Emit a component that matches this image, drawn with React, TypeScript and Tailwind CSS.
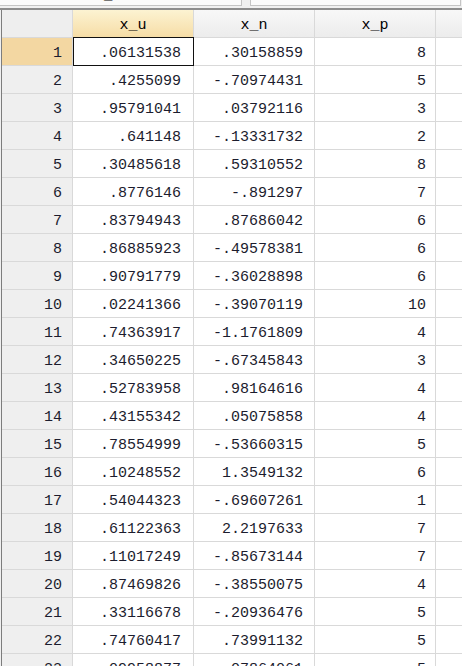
const rows: [string, string, string][] = [
  [".06131538", ".30158859", "8"],
  [".4255099", "-.70974431", "5"],
  [".95791041", ".03792116", "3"],
  [".641148", "-.13331732", "2"],
  [".30485618", ".59310552", "8"],
  [".8776146", "-.891297", "7"],
  [".83794943", ".87686042", "6"],
  [".86885923", "-.49578381", "6"],
  [".90791779", "-.36028898", "6"],
  [".02241366", "-.39070119", "10"],
  [".74363917", "-1.1761809", "4"],
  [".34650225", "-.67345843", "3"],
  [".52783958", ".98164616", "4"],
  [".43155342", ".05075858", "4"],
  [".78554999", "-.53660315", "5"],
  [".10248552", "1.3549132", "6"],
  [".54044323", "-.69607261", "1"],
  [".61122363", "2.2197633", "7"],
  [".11017249", "-.85673144", "7"],
  [".87469826", "-.38550075", "4"],
  [".33116678", "-.20936476", "5"],
  [".74760417", ".73991132", "5"],
  [".09958877", ".07864061", "5"],
];

const mono = "font-['Liberation_Mono','Courier_New',monospace]";

export default function App() {
  return (
    <div className={`w-[462px] h-[666px] overflow-hidden bg-[#f0f0f0] ${mono}`}>
      {/* variable / value strip, mostly scrolled off */}
      <div className="flex h-[6px] gap-[8px] bg-[#f0f0f0]">
        <div className="relative w-[242px] border-r border-b border-[#c4c4c4] bg-[#fafafa]">
          <span className="absolute left-[104px] top-[-14px] text-[14px] leading-[18px] text-black">_</span>
        </div>
        <div className="flex-1 mr-[1px] border-l border-r border-b border-[#c4c4c4] bg-[#fafafa]" />
      </div>
      <div className="h-[2px] bg-[#f0f0f0]" />
      <div className="h-[2px] bg-[#8c8c8c]" />

      <div className="flex">
        <div className="w-[1px] bg-[#f0f0f0]" />
        <div className="w-[1px] bg-[#7d7d7d]" />
        <div className="flex-1 bg-white">
          <div className="grid grid-cols-[71px_121px_121px_121px_1fr] text-[15px] text-[#1c1c2e]">
            <div className="h-[28px] border-r border-b border-[#d9d9d9] bg-[#eeeeee]" />
            <div className="h-[28px] pt-[6px] border-r border-b border-[#d9d9d9] bg-gradient-to-b from-[#fcf3d2] to-[#f6dda6] flex items-center justify-center text-black">
              x_u
            </div>
            <div className="h-[28px] pt-[6px] border-r border-b border-[#d9d9d9] bg-gradient-to-b from-[#f8f8f8] to-[#ececec] flex items-center justify-center text-black">
              x_n
            </div>
            <div className="h-[28px] pt-[6px] border-r border-b border-[#d9d9d9] bg-gradient-to-b from-[#f8f8f8] to-[#ececec] flex items-center justify-center text-black">
              x_p
            </div>
            <div className="h-[28px] border-b border-[#d9d9d9] bg-gradient-to-b from-[#f8f8f8] to-[#ececec]" />

            {rows.map((r, i) => {
              const sel = i === 0;
              return [
                <div
                  key={`n${i}`}
                  className={`h-[28px] pt-[6px] border-r border-b border-[#d9d9d9] flex items-center justify-end pr-[10px] ${
                    sel ? "bg-[#f3d7a2]" : "bg-[#efefef]"
                  }`}
                >
                  {i + 1}
                </div>,
                <div
                  key={`u${i}`}
                  className={`h-[28px] pt-[6px] flex items-center justify-end ${
                    sel
                      ? "border border-[#111] pr-[12px] -mt-[1px] h-[29px]"
                      : "border-r border-b border-[#d9d9d9] pr-[12px]"
                  }`}
                >
                  {r[0]}
                </div>,
                <div
                  key={`x${i}`}
                  className="h-[28px] pt-[6px] border-r border-b border-[#d9d9d9] flex items-center justify-end pr-[11px]"
                >
                  {r[1]}
                </div>,
                <div
                  key={`p${i}`}
                  className="h-[28px] pt-[6px] border-r border-b border-[#d9d9d9] flex items-center justify-end pr-[9px]"
                >
                  {r[2]}
                </div>,
                <div key={`e${i}`} className="h-[28px] border-b border-[#d9d9d9]" />,
              ];
            })}
          </div>
        </div>
      </div>
    </div>
  );
}
